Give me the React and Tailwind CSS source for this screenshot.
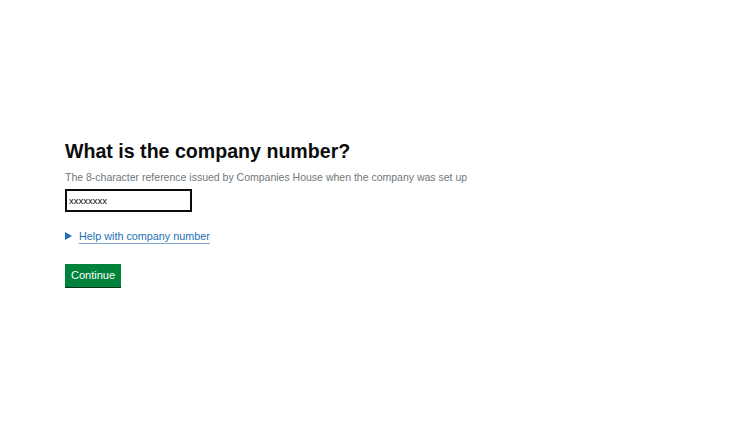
export default function App() {
  return (
    <div className="min-h-screen bg-white">
      <div className="pt-[139px] pl-[65px] font-['Liberation_Sans',Arial,sans-serif] text-[#0b0c0c]">
        <h1 className="text-[19.6px] leading-[24px] font-bold">What is the company number?</h1>
        <p className="mt-[8px] text-[10.5px] leading-[13px] text-[#6f777b]">
          The 8-character reference issued by Companies House when the company was set up
        </p>
        <input
          type="text"
          defaultValue="xxxxxxxx"
          className="mt-[5px] block w-[127px] h-[23px] border-2 border-[#0b0c0c] px-[2px] text-[9.5px] text-[#0b0c0c] outline-none"
        />
        <div className="mt-[17px] flex items-center gap-[7px]">
          <svg width="7" height="8" viewBox="0 0 7 8" className="fill-[#1d70b8]">
            <polygon points="0,0 7,4 0,8" />
          </svg>
          <a href="#" className="text-[10.8px] leading-[14px] text-[#1d70b8] underline underline-offset-[3px] decoration-1 decoration-[#7aa6d6]">
            Help with company number
          </a>
        </div>
        <button className="mt-[21px] h-[23px] px-[6px] bg-[#00823b] text-white text-[11px] shadow-[0_1px_0_#003618]">
          Continue
        </button>
      </div>
    </div>
  );
}
